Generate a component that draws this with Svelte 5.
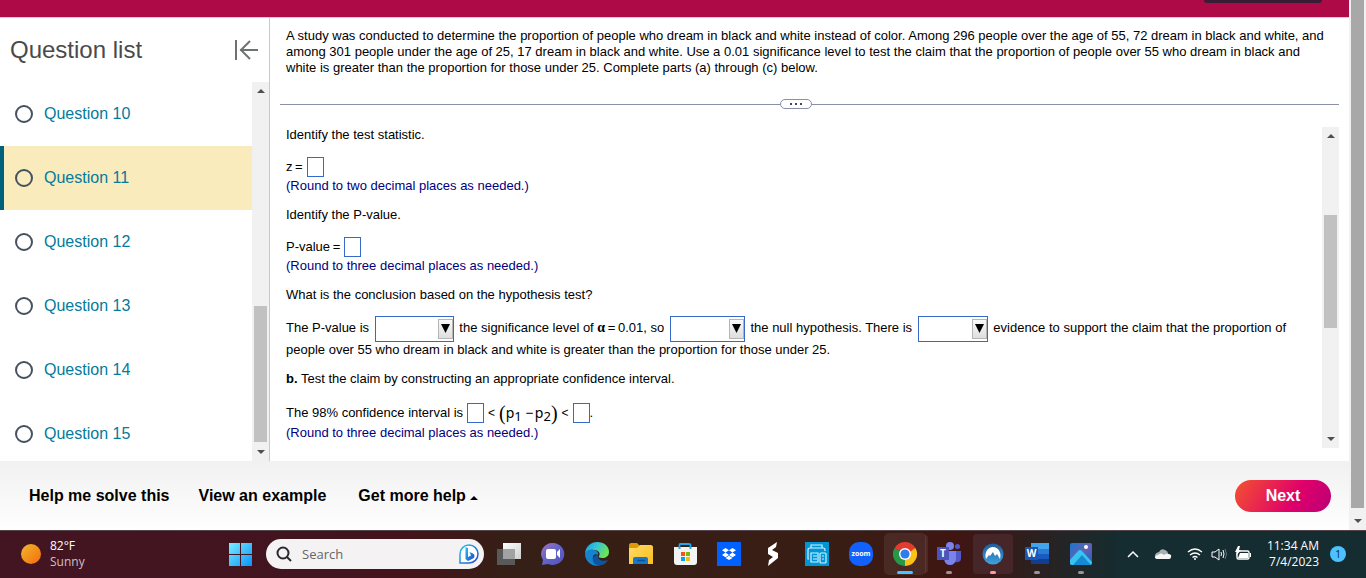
<script>
	let questions = [10, 11, 12, 13, 14, 15];
	let current = 11;

	let zValue = '';
	let pValue = '';
	let lower = '';
	let upper = '';

	let comparison = '';
	let decision = '';
	let evidence = '';
</script>

<div class="screen">
	<div class="browser">
		<div class="page">
			<header class="topbar"><div class="top-pill"></div></header>

			<div class="body">
				<nav class="sidebar" aria-label="Question list">
					<div class="sidebar-head">
						<h1>Question list</h1>
						<button class="collapse" aria-label="Collapse question list">
							<svg width="24" height="22" viewBox="0 0 24 22" fill="none" stroke="#6d7373" stroke-width="2">
								<path d="M2 1v20M24 11H6M16 2L7 11L16 20"/>
							</svg>
						</button>
					</div>
					<div class="list-area">
						<ul>
							{#each questions as number}
								<li class:current={number === current}>
									<a href="#question-{number}" on:click|preventDefault={() => current = number}>
										<span class="status"></span>Question {number}
									</a>
								</li>
							{/each}
						</ul>
						<div class="scrollbar list-scroll">
							<svg class="arrow" viewBox="0 0 8 4"><path d="M0 4L4 0L8 4z"/></svg>
							<div class="track"><div class="thumb"></div></div>
							<svg class="arrow" viewBox="0 0 8 4"><path d="M0 0L4 4L8 0z"/></svg>
						</div>
					</div>
				</nav>

				<main>
					<p class="intro">A study was conducted to determine the proportion of people who dream in black and white instead of color. Among 296 people over the age of 55, 72 dream in black and white, and among 301 people under the age of 25, 17 dream in black and white. Use a 0.01 significance level to test the claim that the proportion of people over 55 who dream in black and white is greater than the proportion for those under 25. Complete parts (a) through (c) below.</p>

					<div class="divider">
						<span class="line"></span>
						<button aria-label="Resize question"><i></i><i></i><i></i></button>
						<span class="line"></span>
					</div>

					<div class="work-area">
						<div class="work">
							<p>Identify the test statistic.</p>
							<div>
								<div class="answer">
									<label for="z-value">z&#8201;=</label>
									<input id="z-value" type="text" bind:value={zValue}>
								</div>
								<p class="hint">(Round to two decimal places as needed.)</p>
							</div>
							<p>Identify the P-value.</p>
							<div>
								<div class="answer">
									<label for="p-value">P-value&#8201;=</label>
									<input id="p-value" type="text" bind:value={pValue}>
								</div>
								<p class="hint">(Round to three decimal places as needed.)</p>
							</div>
							<p>What is the conclusion based on the hypothesis test?</p>
							<p>
								The P-value is
								<span class="dropdown comparison">
									<select aria-label="Comparison" bind:value={comparison}>
										<option value=""></option>
										<option>less than</option>
										<option>greater than</option>
									</select>
									<span class="drop"><svg viewBox="0 0 9 9"><path d="M0 0h9L4.500 9z"/></svg></span>
								</span>
								the significance level of <b class="alpha">α</b>&#8201;=&#8201;0.01, so
								<span class="dropdown decision">
									<select aria-label="Decision" bind:value={decision}>
										<option value=""></option>
										<option>reject</option>
										<option>fail to reject</option>
									</select>
									<span class="drop"><svg viewBox="0 0 9 9"><path d="M0 0h9L4.500 9z"/></svg></span>
								</span>
								the null hypothesis. There is
								<span class="dropdown evidence">
									<select aria-label="Evidence" bind:value={evidence}>
										<option value=""></option>
										<option>sufficient</option>
										<option>insufficient</option>
									</select>
									<span class="drop"><svg viewBox="0 0 9 9"><path d="M0 0h9L4.500 9z"/></svg></span>
								</span>
								evidence to support the claim that the proportion of people over 55 who dream in black and white is greater than the proportion for those under 25.
							</p>
							<p><b>b.</b> Test the claim by constructing an appropriate confidence interval.</p>
							<div>
								<div class="answer interval">
									<label for="lower">The 98% confidence interval is</label>
									<input id="lower" type="text" bind:value={lower}>
									<span class="less">&lt;</span>
									<span class="math"><span class="paren">(</span>p<sub>1</sub><span class="minus">−</span>p<sub>2</sub><span class="paren">)</span></span>
									<span class="less">&lt;</span>
									<input id="upper" type="text" aria-label="Upper limit" bind:value={upper}>
									<span>.</span>
								</div>
								<p class="hint">(Round to three decimal places as needed.)</p>
							</div>
						</div>
						<div class="scrollbar work-scroll">
							<svg class="arrow" viewBox="0 0 8 4"><path d="M0 4L4 0L8 4z"/></svg>
							<div class="track"><div class="thumb"></div></div>
							<svg class="arrow" viewBox="0 0 8 4"><path d="M0 0L4 4L8 0z"/></svg>
						</div>
					</div>
				</main>
			</div>

			<footer>
				<button class="help">Help me solve this</button>
				<button class="help">View an example</button>
				<button class="help more">Get more help <svg width="8" height="4" viewBox="0 0 8 4"><path d="M0 4L4 0L8 4z"/></svg></button>
				<button class="next">Next</button>
			</footer>
		</div>

		<div class="scrollbar page-scroll">
			<div class="track"><div class="thumb"></div></div>
			<svg class="arrow" viewBox="0 0 8 4"><path d="M0 0L4 4L8 0z"/></svg>
		</div>
	</div>

	<div class="taskbar">
		<button class="weather">
			<span class="sun"></span>
			<span class="lines"><span>82°F</span><span class="dim">Sunny</span></span>
		</button>

		<button class="app" aria-label="Start">
			<svg viewBox="0 0 24 24">
				<defs>
					<linearGradient id="win" gradientUnits="userSpaceOnUse" x1="0" y1="0" x2="24" y2="24"><stop stop-color="#7cf2ff"/><stop offset="1" stop-color="#0b91fa"/></linearGradient>
				</defs>
				<path fill="url(#win)" d="M1 1h11v11H1zM13 1h11v11H13zM1 13h11v11H1zM13 13h11v11H13z"/>
			</svg>
		</button>

		<div class="search">
			<svg width="16" height="16" viewBox="0 0 16 16" fill="none" stroke="#292a2e" stroke-width="2"><circle cx="7" cy="7" r="5.500"/><path d="M11 11L15 15"/></svg>
			<input type="text" placeholder="Search" aria-label="Search">
			<svg width="22" height="22" viewBox="0 0 22 22">
				<defs>
					<linearGradient id="bing" x1="0" y1="0" x2="1" y2="1"><stop stop-color="#25c4ef"/><stop offset="1" stop-color="#2347c5"/></linearGradient>
				</defs>
				<path d="M2 20V11a9 9 0 1 1 9 9z" fill="#fff" stroke="url(#bing)" stroke-width="1.500"/>
				<path d="M7.500 4l2.500 1v9l3-1.500-1.500-3.500 3.500 1.500c2 1 2 4 0 5l-5 2.500-2.500-2z" fill="url(#bing)"/>
			</svg>
		</div>

		<div class="apps">
			<button class="app" aria-label="Task view">
				<svg viewBox="0 0 24 24">
					<defs><linearGradient id="view" x2="1" y2="1"><stop stop-color="#fff"/><stop offset="1" stop-color="#cfcfcf"/></linearGradient></defs>
					<path fill="url(#view)" d="M6 1h18v16H6z"/><path fill="#595959" d="M0 7h18v16H0z"/><path fill="#a2a2a2" d="M6 7h12v10H6z"/>
				</svg>
			</button>
			<button class="app" aria-label="Chat">
				<svg viewBox="0 0 24 24">
					<defs><linearGradient id="chat" x2="1" y2="1"><stop stop-color="#a072b5"/><stop offset=".5" stop-color="#6264c9"/><stop offset="1" stop-color="#554fc2"/></linearGradient></defs>
					<path fill="url(#chat)" d="M12 1A11.500 11 0 1 1 7 22L1 23L2 18A11.500 11 0 0 1 12 1z"/>
					<rect x="5" y="7" width="10" height="10" rx="2" fill="#fff"/><path fill="#fff" d="M16 10l3-3v9l-3-3z"/>
				</svg>
			</button>
			<button class="app" aria-label="Edge">
				<svg viewBox="0 0 24 24">
					<defs><linearGradient id="edge" x1="0" y1="0" x2="1" y2=".4"><stop stop-color="#159bdb"/><stop offset=".5" stop-color="#35c3d8"/><stop offset="1" stop-color="#6be35a"/></linearGradient></defs>
					<path fill="url(#edge)" d="M0 11C1 4 6 0 12 0c7 0 12 4 12 10 0 4-3 6-7 6-2 0-4-1-3-2 2-3-1-6-5-6-4-1-8 1-9 4z"/>
					<path fill="#1683d0" d="M0 12C1 9 4 7 8 8c4 0 6 3 5 5-3-2-6 1-5 4 1 4 6 5 8 6C8 26 0 20 0 12z"/>
					<path fill="#0d559f" d="M13 13c-4 0-6 3-5 6 1 4 5 5 8 4 3 0 5-2 7-5-5 2-11 0-10-5z"/>
				</svg>
			</button>
			<button class="app" aria-label="File Explorer">
				<svg viewBox="0 0 24 24">
					<defs><linearGradient id="folder" x2="1" y2="1"><stop stop-color="#ffdc67"/><stop offset="1" stop-color="#fdbc1e"/></linearGradient></defs>
					<path fill="#dc9a08" d="M0 3c0-1 1-2 2-2h6l3 3v4H0z"/><path fill="url(#folder)" d="M0 6h8l3-3h11c1 0 2 1 2 2v17H0z"/>
					<path fill="#1479ce" d="M4 22v-5q0-2 2-2h11q2 0 2 2v5z"/><path stroke="#095297" stroke-width="1.500" d="M8 18.500h8"/>
				</svg>
			</button>
			<button class="app" aria-label="Store">
				<svg viewBox="0 0 24 24">
					<path fill="none" stroke="#22a7e8" stroke-width="1.800" d="M6.500 8V3q0-1 1-1h8q2 0 2 1v5"/>
					<path fill="#f3f3f3" d="M1 5h23v15q0 3-3 3H4q-3 0-3-3z"/>
					<path fill="#22a7e8" d="M5.500 5h2v2h-2zM16.500 5h2v2h-2z"/>
					<path fill="#f15321" d="M8 10h4v4H8z"/><path fill="#7eb801" d="M13 10h4v4h-4z"/><path fill="#03a4ef" d="M8 15h4v4H8z"/><path fill="#ffb900" d="M13 15h4v4h-4z"/>
				</svg>
			</button>
			<button class="app" aria-label="Dropbox">
				<svg viewBox="0 0 24 24"><path fill="#0061fe" d="M0 0h24v24H0z"/><path fill="#fff" d="M8.500 6l3.500 2.300L8.500 10.600 5 8.300zM15.500 6L19 8.300l-3.500 2.300L12 8.300zM8.500 10.600L12 12.900l-3.500 2.300L5 12.900zM15.500 10.600l3.500 2.300-3.500 2.300-3.500-2.300zM12 13.800l3.500 2.100L12 18l-3.500-2.100z"/></svg>
			</button>
			<button class="app" aria-label="Spark">
				<svg viewBox="0 0 24 24"><path fill="#fff" d="M16 0L7 6v6l5 3-4 3-1 6 10-8v-5l-6-3 4-3z"/></svg>
			</button>
			<button class="app" aria-label="Print and scan">
				<svg viewBox="0 0 24 24"><path fill="#0096d6" d="M0 0h24v24H0z"/><g fill="none" stroke="#d3f1ff" stroke-width="1.200"><path d="M6 6V3h11v3M4 17H3V8q0-2 2-2h13q2 0 2 2v1"/><path d="M6 11h7v9H6zM8 14h4M8 17h4"/><rect x="15" y="11" width="6" height="10" rx="1"/><path d="M17 14h2M17 17h2"/></g></svg>
			</button>
			<button class="app" aria-label="Zoom">
				<svg viewBox="0 0 24 24"><rect width="24" height="24" rx="10" fill="#1261fa"/><text x="12" y="14" text-anchor="middle" font-size="7" font-weight="700" fill="#fff">zoom</text></svg>
			</button>
			<button class="app active stacked" aria-label="Chrome">
				<svg viewBox="0 0 24 24">
					<path fill="#e33b2e" d="M12 12L1.600 6A12 12 0 0 1 22.400 6z"/><path fill="#fbc116" d="M12 12L22.400 6A12 12 0 0 1 12 24z"/><path fill="#279847" d="M12 12v12A12 12 0 0 1 1.600 6z"/>
					<path fill="#e33b2e" d="M12 6h10.400L17 12z"/><path fill="#fbc116" d="M17 10l5-4-10 18 5-9z"/><path fill="#279847" d="M1.600 6L7 15l5 3z"/>
					<circle cx="12" cy="12" r="6" fill="#fff"/><circle cx="12" cy="12" r="4.600" fill="#2e7ced"/>
				</svg>
			</button>
			<button class="app running" aria-label="Teams">
				<svg viewBox="0 0 24 24">
					<circle cx="20.500" cy="4.500" r="2.500" fill="#5059c9"/><circle cx="13" cy="4" r="4" fill="#7b83eb"/>
					<path fill="#5059c9" d="M17 9h7v8q-1 4-6 3z"/><path fill="#7b83eb" d="M7 9h12v8q-1 6-6 6t-6-6z"/>
					<path fill="#4b53bc" d="M0 5h12v13H0z"/><text x="6" y="15" text-anchor="middle" font-size="10" font-weight="700" fill="#fff">T</text>
				</svg>
			</button>
			<button class="app active alert" aria-label="NordVPN">
				<svg viewBox="0 0 24 24"><defs><linearGradient id="nord" x2="0" y2="1"><stop stop-color="#215c9c"/><stop offset="1" stop-color="#3fa1df"/></linearGradient></defs><circle cx="12" cy="12" r="10.500" fill="url(#nord)"/><path fill="#fff" d="M5 17C3 10 7 5 12 5s9 5 7 12l-3-5-2 2-2-4-3 4-1-1z"/></svg>
			</button>
			<button class="app running" aria-label="Word">
				<svg viewBox="0 0 24 24"><path fill="#41a5ee" d="M6 1h18v6H6z"/><path fill="#2b7cd3" d="M6 7h18v5H6z"/><path fill="#185abd" d="M6 12h18v5H6z"/><path fill="#103f91" d="M6 17h18v5H6z"/><path fill="#1b55b6" d="M0 5h13v13H0z"/><text x="6.500" y="15" text-anchor="middle" font-size="10" font-weight="700" fill="#fff">W</text></svg>
			</button>
			<button class="app running" aria-label="Photos">
				<svg viewBox="0 0 24 24"><defs><linearGradient id="photo" x2="1" y2="1"><stop stop-color="#1777ce"/><stop offset=".5" stop-color="#6261b4"/><stop offset="1" stop-color="#205fbd"/></linearGradient></defs><rect x="1" y="1" width="22" height="22" rx="2" fill="url(#photo)"/><path fill="#36c5ef" d="M1 18l8-9q2-2 4 0l10 11q0 3-2 3H3q-2 0-2-2z"/><path fill="#158ad2" d="M4 23l9-10 9 10z"/><circle cx="17" cy="5" r="2" fill="#fff"/></svg>
			</button>
		</div>

		<div class="tray">
			<button aria-label="Show hidden icons"><svg width="12" height="16" viewBox="0 0 12 16" fill="none" stroke="#fff" stroke-width="1.500"><path d="M1 11l5-5 5 5"/></svg></button>
			<button aria-label="OneDrive"><svg width="18" height="16" viewBox="0 0 18 16"><path fill="#a8b0b3" d="M1 12q-1-5 4-6 2-4 6-2 3 1 3 4l-6 5z"/><path fill="#f6f6f6" d="M4 13q-3 0-3-2 1-2 3-2 3-3 6 0 2-2 5-1 3 1 2 3 0 2-2 2z"/></svg></button>
			<button class="status-icons" aria-label="Network, volume and battery">
				<svg width="16" height="16" viewBox="0 0 16 16" fill="none" stroke="#fff" stroke-width="1.400"><path d="M1 6q7-6 14 0M3 9q5-4 10 0M5.500 11.500q2.500-2 5 0"/><circle cx="8" cy="13" r="1" fill="#fff" stroke="none"/></svg>
				<svg width="16" height="16" viewBox="0 0 16 16" fill="none" stroke="#fff"><path d="M1 6h3l4-3v11l-4-3H1zM10 6q1 2 0 4M12 4q2 4 0 8"/><path stroke="#697679" d="M14 3q3 5 0 10"/></svg>
				<svg width="17" height="16" viewBox="0 0 17 16"><rect x="2" y="5" width="12" height="8" rx="1.500" fill="none" stroke="#fff" stroke-width="1.400"/><path fill="#fff" d="M5 7h8v5H3zM15 7h1v4h-1zM3 0L0 6h2L1 10l5-6H4l1-4z"/></svg>
			</button>
			<button class="clock"><span>11:34 AM</span><span>7/4/2023</span></button>
			<button class="badge" aria-label="1 notification">1</button>
		</div>
	</div>
</div>

<style>
	:global(body) {
		margin: 0;
		background: #fff;
	}

	.screen {
		--link: #047a9c;
		--crimson: #ae0a48;
		--field: #3769cb;
		--track: #f1f1f1;

		display: flex;
		flex-direction: column;
		min-height: 100vh;
		font-family: "Liberation Sans", Arial, sans-serif;
		font-size: 13px;
		line-height: 16px;
		color: #000;
	}

	button {
		border: 0;
		padding: 0;
		background: none;
		font: inherit;
		color: inherit;
	}

	p, h1, ul {
		margin: 0;
		padding: 0;
	}

	.browser {
		flex: 1;
		display: flex;
	}

	.page {
		flex: 1;
		min-width: 0;
		display: flex;
		flex-direction: column;
	}

	.topbar {
		display: flex;
		justify-content: flex-end;
		height: 17px;
		padding-right: 27px;
		background: var(--crimson);
		border-bottom: 1px solid #dccbd8;
	}

	.top-pill {
		width: 118px;
		height: 3px;
		border-radius: 0 0 12px 12px;
		background: #3a1d34;
	}

	.body {
		flex: 1;
		display: flex;
	}

	/* Scrollbars */
	.scrollbar {
		box-sizing: border-box;
		width: 17px;
		flex: none;
		display: flex;
		flex-direction: column;
		align-items: center;
		padding: 7px 0;
		background: var(--track);
	}

	.arrow {
		width: 8px;
		height: 4px;
		flex: none;
		fill: #505050;
	}

	.track {
		flex: 1;
		width: 13px;
		display: flex;
		flex-direction: column;
		margin: 8px 0;
	}

	.thumb {
		background: #c1c1c1;
	}

	.list-scroll .track {
		justify-content: flex-end;
	}

	.list-scroll .thumb {
		height: 40%;
	}

	.work-scroll .track {
		justify-content: center;
	}

	.work-scroll .thumb {
		height: 40%;
		margin-bottom: 32px;
	}

	.page-scroll {
		padding-top: 0;
	}

	.page-scroll .track {
		margin: 0 0 11px;
	}

	.page-scroll .thumb {
		flex: 1;
		background: #a8a8a8;
	}

	/* Question list */
	.sidebar {
		width: 269px;
		flex: none;
		display: flex;
		flex-direction: column;
		border-right: 1px solid #c7c7d6;
	}

	.sidebar-head {
		display: flex;
		justify-content: space-between;
		align-items: center;
		height: 64px;
		padding: 0 11px 0 10px;
	}

	h1 {
		font-size: 24px;
		line-height: 32px;
		font-weight: 400;
		color: #4a4a4a;
	}

	.collapse svg {
		display: block;
	}

	.list-area {
		flex: 1 1 0;
		min-height: 0;
		display: flex;
	}

	ul {
		flex: 1;
		list-style: none;
		overflow: hidden;
	}

	li {
		height: 64px;
		border-left: 4px solid transparent;
	}

	li.current {
		background: #f9ebbc;
		border-color: #00627a;
	}

	.list-area ul {
		height: 0;
		min-height: 100%;
	}

	a {
		display: flex;
		align-items: center;
		gap: 11px;
		height: 63px;
		padding-left: 11px;
		font-size: 16px;
		color: var(--link);
		text-decoration: none;
	}

	.status {
		box-sizing: border-box;
		width: 18px;
		height: 18px;
		border: 2px solid #45525e;
		border-radius: 50%;
	}

	/* Exercise */
	main {
		flex: 1;
		min-width: 0;
		padding: 10px 10px 12px;
	}

	.intro {
		padding: 0 12px 0 6px;
	}

	.divider {
		display: flex;
		align-items: center;
		margin: 23px 0 18px;
	}

	.line {
		flex: 1 1 0;
		height: 1px;
		background: #8c8fa8;
	}

	/* the handle is centred on the text column, not on the scrollbar side */
	.line:last-child {
		flex-basis: 28px;
	}

	.divider button {
		box-sizing: border-box;
		width: 32px;
		height: 10px;
		display: flex;
		justify-content: center;
		align-items: center;
		gap: 3px;
		border: 1px solid #8c8fa8;
		border-radius: 5px;
	}

	.divider i {
		width: 2px;
		height: 2px;
		background: #45485f;
	}

	.work-area {
		display: flex;
	}

	.work {
		flex: 1;
		display: flex;
		flex-direction: column;
		gap: 13px;
		padding: 0 30px 7px 6px;
	}

	.answer {
		display: flex;
		align-items: center;
		gap: 4px;
		height: 22px;
	}

	.answer input {
		box-sizing: border-box;
		width: 17px;
		height: 20px;
		padding: 0;
		border: 1px solid var(--field);
		font: inherit;
	}

	.interval {
		height: 25px;
	}

	.interval > span:last-child {
		margin-left: -4px;
	}

	.hint {
		color: #000080;
	}

	.alpha {
		font-family: "Liberation Serif", serif;
		font-size: 14px;
	}

	.less {
		font-size: 12px;
	}

	.math {
		display: flex;
		align-items: center;
		font-family: "Noto Sans", sans-serif;
		font-size: 14px;
	}

	.math sub {
		font-size: 13px;
		vertical-align: baseline;
		padding-top: 6px;
	}

	.paren {
		font-family: "Liberation Serif", serif;
		font-size: 20px;
	}

	.minus {
		padding: 0 1px 0 4px;
	}

	.dropdown {
		box-sizing: border-box;
		display: inline-grid;
		height: 26px;
		margin: 0 2px;
		border: 1px solid var(--field);
		vertical-align: middle;
	}

	.dropdown > * {
		grid-area: 1 / 1;
	}

	.comparison {
		width: 79px;
	}

	.decision {
		width: 75px;
	}

	.evidence {
		width: 70px;
	}

	select {
		appearance: none;
		width: 100%;
		border: 0;
		padding: 0 18px 0 4px;
		background: #fff;
		font: inherit;
	}

	.drop {
		box-sizing: border-box;
		width: 15px;
		height: 20px;
		justify-self: end;
		align-self: center;
		display: flex;
		justify-content: center;
		padding-top: 4px;
		border: 1px solid #b5b5b5;
		background: linear-gradient(#fafafa, #dedede);
		pointer-events: none;
	}

	.drop svg {
		width: 9px;
		height: 9px;
	}

	/* Footer */
	footer {
		display: flex;
		align-items: center;
		gap: 29px;
		height: 69px;
		padding: 0 18px 0 29px;
		background: linear-gradient(#f1f1f1, #fefefe);
	}

	.help, .next {
		font-size: 16px;
		font-weight: 700;
	}

	.more {
		margin-left: 3px;
	}

	.more svg {
		vertical-align: 1px;
	}

	.next {
		margin-left: auto;
		width: 96px;
		height: 32px;
		border-radius: 16px;
		color: #fff;
		background: linear-gradient(120deg, #f24b34 5%, #df006a 62%, #ba0076);
	}

	/* Taskbar */
	.taskbar {
		box-sizing: border-box;
		display: flex;
		align-items: center;
		height: 48px;
		padding-bottom: 2px;
		border-top: 1px solid #53454a;
		background: linear-gradient(90deg, #431421 0%, #421420 25%, #44141a 30%, #351f16 37%, #391d15 62%, #401512 70%, #2a2120 76%, #152c30 82%, #152c30 100%);
		font-family: "Open Sans", "Noto Sans", sans-serif;
		font-size: 12px;
		color: #fff;
	}

	.weather {
		width: 218px;
		display: flex;
		align-items: center;
		gap: 9px;
		padding-left: 21px;
		text-align: left;
	}

	.sun {
		width: 20px;
		height: 20px;
		border-radius: 50%;
		background: linear-gradient(135deg, #f0b92d, #f66a0b);
	}

	.lines, .clock {
		display: flex;
		flex-direction: column;
	}

	.dim {
		color: #d0bfc5;
	}

	.app {
		box-sizing: border-box;
		position: relative;
		width: 44px;
		height: 44px;
		display: flex;
		align-items: center;
		justify-content: center;
	}

	.app svg {
		width: 24px;
		height: 24px;
	}

	.active::before {
		content: "";
		position: absolute;
		inset: 2px;
		border-radius: 4px;
		background: rgba(255, 255, 255, 0.07);
	}

	.stacked::before {
		box-shadow: 0 0 0 1px rgba(255, 255, 255, 0.08), 4px 0 0 -1px rgba(255, 255, 255, 0.08);
	}

	.alert::before {
		background: #472629;
	}

	.active svg {
		position: relative;
	}

	.running::after, .active::after {
		content: "";
		position: absolute;
		bottom: 2px;
		width: 6px;
		height: 3px;
		border-radius: 2px;
		background: #9b9493;
	}

	.stacked::after {
		width: 16px;
		background: #4cc2ff;
	}

	.alert::after {
		background: #ff99a4;
	}

	.search {
		box-sizing: border-box;
		display: flex;
		align-items: center;
		gap: 10px;
		width: 218px;
		height: 30px;
		margin: 0 3px 0 4px;
		padding: 0 4px 0 10px;
		border-radius: 15px;
		background: #f4f2f3;
	}

	.search input {
		flex: 1;
		min-width: 0;
		border: 0;
		padding: 0;
		background: none;
		font: inherit;
		font-size: 13px;
	}

	.search input::placeholder {
		color: #666;
		opacity: 1;
	}

	.apps {
		display: flex;
	}

	.tray {
		display: flex;
		align-items: center;
		gap: 15px;
		margin-left: auto;
		padding-right: 20px;
	}

	.tray svg {
		display: block;
	}

	.status-icons {
		display: flex;
		gap: 8px;
	}

	.clock {
		text-align: right;
		align-items: flex-end;
	}

	.badge {
		width: 16px;
		height: 16px;
		margin-left: -4px;
		border-radius: 50%;
		background: #4cc2ff;
		color: #123;
		font-size: 10px;
	}
</style>
